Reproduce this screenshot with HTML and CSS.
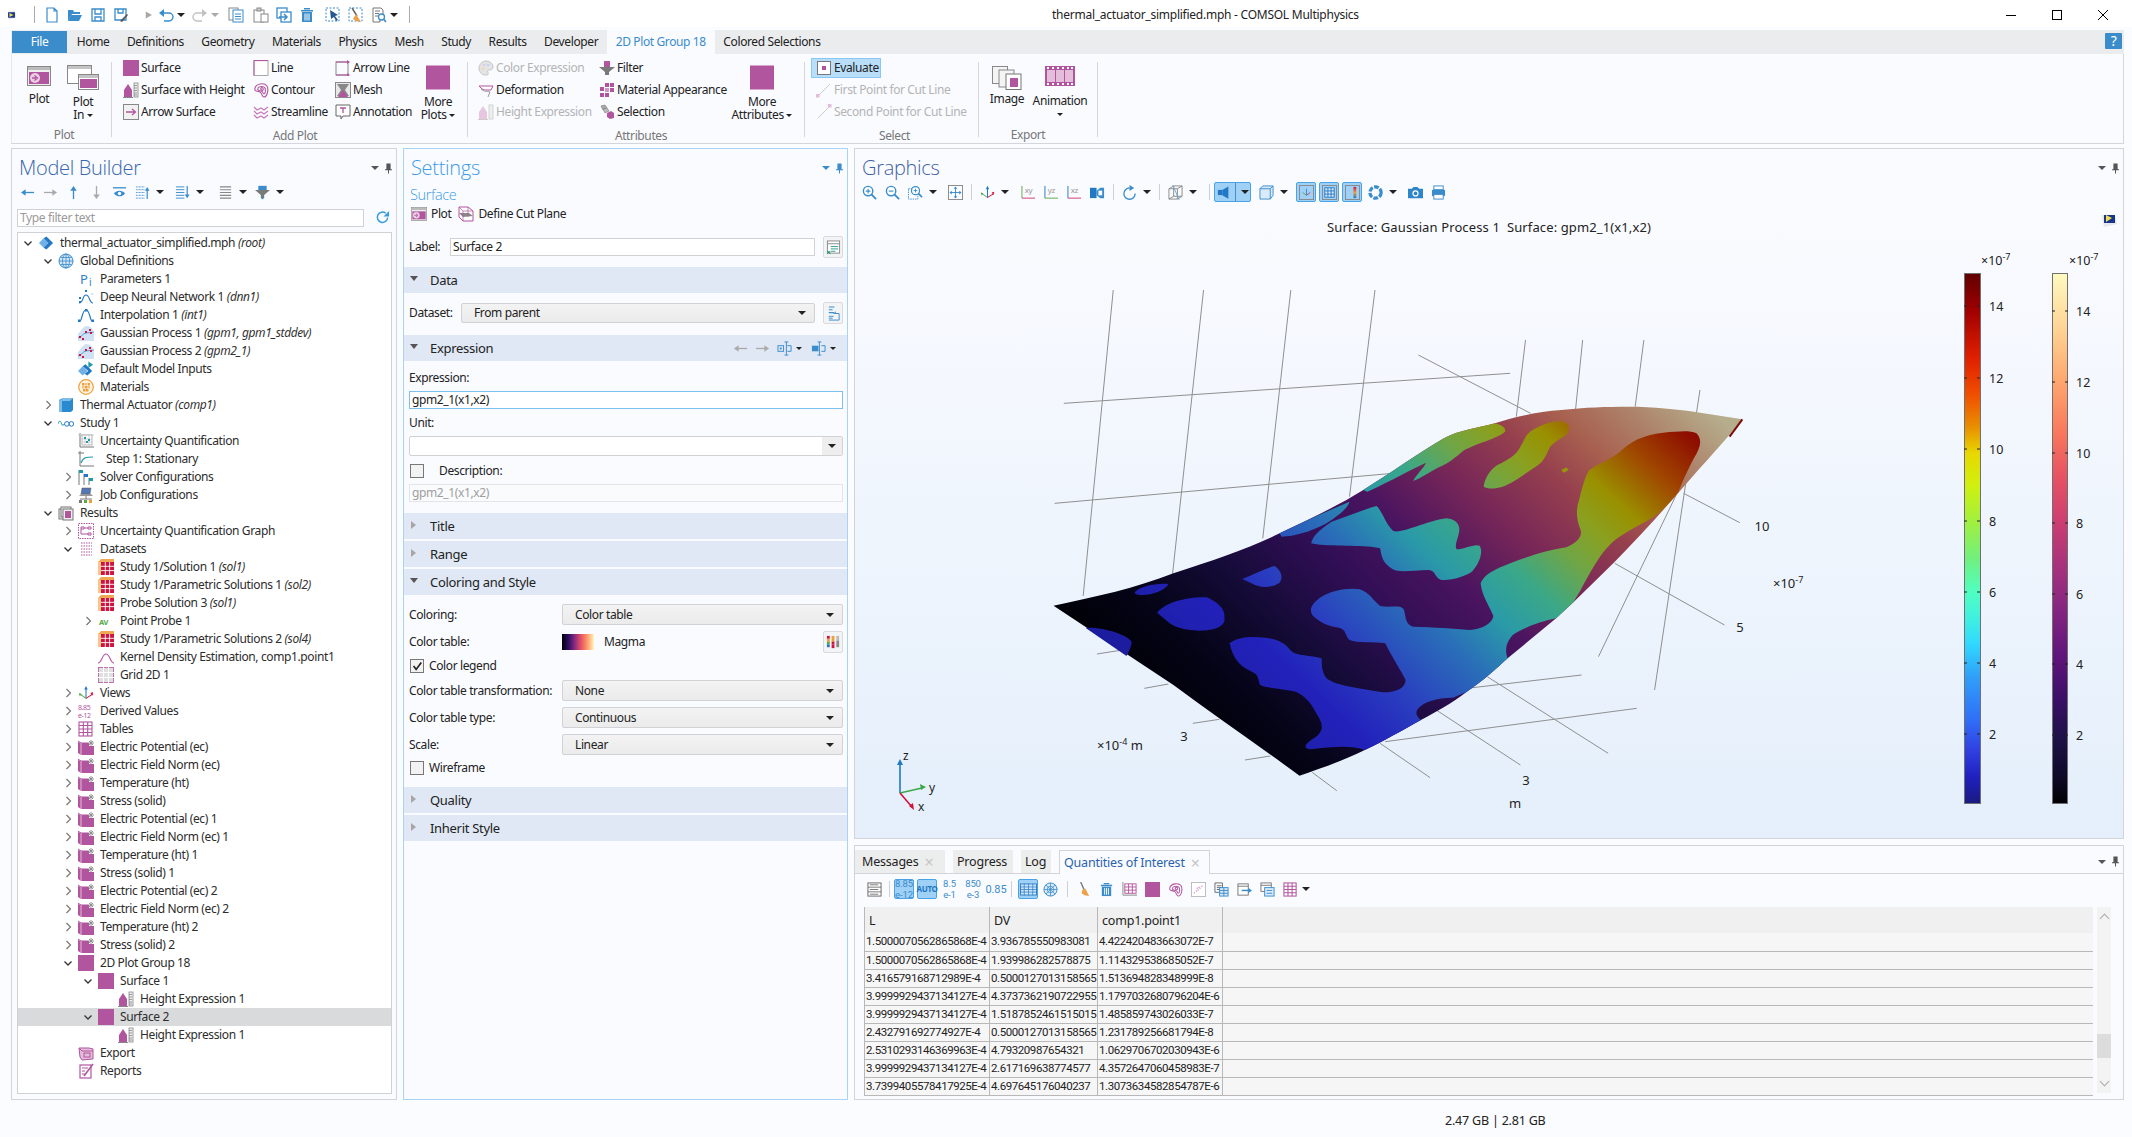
FILE: index.html
```html
<!DOCTYPE html>
<html lang="en">
<head>
<meta charset="utf-8">
<title>thermal_actuator_simplified.mph - COMSOL Multiphysics</title>
<link rel="stylesheet" href="styles.css">
</head>
<body>
<svg class="defs" aria-hidden="true">
<defs>
<symbol id="logo" viewBox="0 0 16 16"><path d="M3 3l10-2 2 11-11 3z" fill="#e8eaee"/><rect x="3" y="4" width="10" height="8" fill="#17358f"/><path d="M5 5l6 3-6 3z" fill="#f2e04a"/></symbol>
<symbol id="new" viewBox="0 0 16 16"><path d="M3 1h7l3 3v11H3z M10 1v3h3" fill="#fff" stroke="#3a8ccb" stroke-width="1.2"/></symbol>
<symbol id="open" viewBox="0 0 16 16"><path d="M1 14V3h5l1 2h6v2H5z" fill="#3a8ccb"/><path d="M1 14l3-6h11l-3 6z" fill="#3a8ccb"/></symbol>
<symbol id="save" viewBox="0 0 16 16"><path d="M2 2h12v12H2z M5 2v5h6V2 M5 14v-4h6v4" fill="none" stroke="#3a8ccb" stroke-width="1.3"/></symbol>
<symbol id="saveas" viewBox="0 0 16 16"><path d="M2 2h11v11H2z M5 2v4h5V2" fill="none" stroke="#3a8ccb" stroke-width="1.3"/><path d="M7 14l7-7 1 1-6 7z" fill="#555"/></symbol>
<symbol id="play" viewBox="0 0 16 16"><path d="M4 3l9 5-9 5z" fill="#a8a8a8"/></symbol>
<symbol id="undo" viewBox="0 0 16 16"><path d="M5 6h6a3.500 3.500 0 010 8H6" fill="none" stroke="#3a8ccb" stroke-width="1.4"/><path d="M1 6l5-4v8z" fill="#3a8ccb"/></symbol>
<symbol id="redo" viewBox="0 0 16 16"><path d="M11 6H5a3.500 3.500 0 000 8h5" fill="none" stroke="#c2c2c2" stroke-width="1.4"/><path d="M15 6l-5-4v8z" fill="#c2c2c2"/></symbol>
<symbol id="copy" viewBox="0 0 16 16"><rect x="1" y="1" width="9" height="12" fill="#fff" stroke="#888"/><rect x="5" y="3" width="10" height="12" fill="#fff" stroke="#3a8ccb"/><path d="M7 7h6M7 9.500h6M7 12h6" stroke="#3a8ccb"/></symbol>
<symbol id="paste" viewBox="0 0 16 16"><rect x="1" y="3" width="10" height="12" fill="#fff" stroke="#888"/><rect x="4" y="1" width="4" height="3" fill="#ccc" stroke="#888"/><rect x="8" y="7" width="7" height="8" fill="#fff" stroke="#888"/></symbol>
<symbol id="dup" viewBox="0 0 16 16"><rect x="1" y="1" width="10" height="10" fill="#fff" stroke="#3a8ccb" stroke-width="1.300"/><rect x="5" y="5" width="10" height="10" fill="#fff" stroke="#3a8ccb" stroke-width="1.300"/><path d="M3 10h8M8 7l3 3-3 3" fill="none" stroke="#3a8ccb" stroke-width="1.500"/></symbol>
<symbol id="trash" viewBox="0 0 16 16"><path d="M5 2.500V1h6v1.500M2 3h12v1.500H2z" fill="#3a8ccb"/><path d="M3 5h10v10H3z" fill="#3a8ccb"/><path d="M6 6.500v7M8 6.500v7M10 6.500v7" stroke="#fff"/></symbol>
<symbol id="selbox" viewBox="0 0 16 16"><rect x="1" y="1" width="13" height="13" fill="#fff" stroke="#3a8ccb" stroke-dasharray="2 1.500"/><path d="M5 3l8 5-3 1 3 4-2 1-2-4-3 2z" fill="#28588f"/></symbol>
<symbol id="broom" viewBox="0 0 16 16"><rect x="1" y="1" width="13" height="13" fill="#fff" stroke="#3a8ccb" stroke-dasharray="2 1.500"/><path d="M4 1l5 8" stroke="#666" stroke-width="1.500"/><path d="M8 7l5 8-5-1-3-2z" fill="#eda24a"/></symbol>
<symbol id="find" viewBox="0 0 16 16"><path d="M2 1h8l2 2v6H9v6H2z M4 4h5M4 6.500h4M4 9h3" fill="#fff" stroke="#777"/><circle cx="10.500" cy="10" r="3" fill="#fff" stroke="#3a8ccb" stroke-width="1.300"/><path d="M12.500 12l2.500 3" stroke="#3a8ccb" stroke-width="1.600"/></symbol>
<symbol id="sq" viewBox="0 0 16 16"><rect width="16" height="16" fill="#b2559f"/></symbol>
<symbol id="plotbtn" viewBox="0 0 24 20"><rect x=".5" y=".5" width="23" height="19" fill="#eee" stroke="#888"/><rect x="1" y="1" width="22" height="3" fill="#bbb"/><rect x="2" y="6" width="20" height="12" fill="#b2559f"/><circle cx="8" cy="12" r="5" fill="#e9cfe3"/><path d="M5 12h4M7.500 9.500l3 2.500-3 2.500" fill="none" stroke="#b2559f" stroke-width="1.300"/></symbol>
<symbol id="plotin" viewBox="0 0 32 25"><rect x=".5" y=".5" width="24" height="18" fill="#fff" stroke="#888"/><rect x="1" y="1" width="23" height="3" fill="#c4c4c4"/><rect x="11.500" y="9.500" width="20" height="15" fill="#fff" stroke="#888"/><rect x="12" y="10" width="19" height="3" fill="#c4c4c4"/><rect x="13" y="14" width="17" height="9" fill="#b2559f"/></symbol>
<symbol id="height" viewBox="0 0 16 16"><path d="M1 15V8l4-6 4 6v7z" fill="#b2559f"/><rect x="11" y="1" width="4" height="14" fill="#eee" stroke="#888" stroke-width=".8"/><path d="M11 3.500h3M11 6h3M11 8.500h3M11 11h3M11 13h3" stroke="#777" stroke-width=".7"/><path d="M0 15.500h10" stroke="#888"/></symbol>
<symbol id="heightoff" viewBox="0 0 16 16"><path d="M1 15V8l4-6 4 6v7z" fill="#e6c7df"/><rect x="11" y="1" width="4" height="14" fill="#eee" stroke="#ccc" stroke-width=".8"/><path d="M0 15.500h10" stroke="#ccc"/></symbol>
<symbol id="arrowsurf" viewBox="0 0 16 16"><rect x=".5" y=".5" width="15" height="15" fill="#f1f1f1" stroke="#888"/><path d="M3 8h9M9 5l3.500 3L9 11" fill="none" stroke="#b2559f" stroke-width="1.300"/></symbol>
<symbol id="line" viewBox="0 0 16 16"><rect x="1" y=".5" width="14" height="15" fill="#fff" stroke="#a9a9a9"/><path d="M1 .5h14" stroke="#b2559f" stroke-width="1.200"/><path d="M1 .5v15" stroke="#b2559f"/></symbol>
<symbol id="contour" viewBox="0 0 16 16"><g fill="none" stroke="#b2559f" stroke-width="1.100"><path d="M2 6c1-4 9-6 12-2 2 4 0 11-3 11-2 0-2-4-4-5S1 10 2 6z"/><path d="M5 6c1-2 6-2 7 0 1 3 0 6-1 6s-1-3-3-3-4-1-3-3z"/><path d="M8 6c1-1 3 0 2 2-1 1-3-1-2-2z"/></g></symbol>
<symbol id="stream" viewBox="0 0 16 16"><g fill="none" stroke="#c779b9" stroke-width="1.200"><path d="M1 3l3 3 4-2 3 2 4-3"/><path d="M1 7l3 3 4-2 3 2 4-3"/><path d="M1 11l3 3 4-2 3 2 4-3"/></g></symbol>
<symbol id="arrowline" viewBox="0 0 16 16"><rect x="1" y="2" width="12" height="13" fill="none" stroke="#888"/><path d="M1 2h13M1 15h13" stroke="#b2559f"/><path d="M12 0l3 2-3 2zM12 13l3 2-3 2z" fill="#b2559f"/></symbol>
<symbol id="mesh" viewBox="0 0 16 16"><rect x=".5" y=".5" width="15" height="15" fill="#e8e8e8" stroke="#888"/><path d="M2 2h12l-4 6 4 6H2l4-6z" fill="#888"/><path d="M3 15l5-7 5 7z" fill="#b2559f"/></symbol>
<symbol id="annot" viewBox="0 0 16 16"><path d="M1 1h14v11H8l-2 3v-3H1z" fill="#fff" stroke="#666"/><path d="M5 4h6M8 4v5" stroke="#b2559f" stroke-width="1.300"/></symbol>
<symbol id="colorexpr" viewBox="0 0 16 16"><path d="M8 1c4 0 7 3 7 6s-3 3-4 3-2 1-1 3-1 2-3 2C3 15 1 11 1 8s3-7 7-7z" fill="#e4e4e4" stroke="#c4c4c4"/><circle cx="6" cy="5" r="1.300" fill="#e6c7df"/><circle cx="10" cy="5" r="1.300" fill="#bcd7ee"/><circle cx="5" cy="9" r="1.300" fill="#f1d5b0"/></symbol>
<symbol id="deform" viewBox="0 0 16 16"><path d="M1 4h14l-2 4H8C6 8 4 7 3 6z" fill="#fff" stroke="#b2559f"/><path d="M3 7c3 3 6 2 9 3l-2 5" fill="none" stroke="#999"/></symbol>
<symbol id="filter" viewBox="0 0 16 16"><path d="M0 7h16l-6 5v3H6v-3z" fill="#7a7a7a"/><rect x="5" y="1" width="6" height="6" fill="#b2559f"/></symbol>
<symbol id="matapp" viewBox="0 0 16 16"><g fill="#b2559f"><rect x="1" y="5" width="4" height="4"/><rect x="6" y="1" width="4" height="4"/><rect x="11" y="1" width="4" height="4"/><rect x="11" y="6" width="4" height="4"/><rect x="6" y="6" width="4" height="4" opacity=".6"/><rect x="1" y="11" width="4" height="4"/><rect x="6" y="11" width="4" height="4"/></g></symbol>
<symbol id="selection" viewBox="0 0 16 16"><path d="M2 2l4-1 2 3-4 2z" fill="#aaa" stroke="#777" stroke-width=".6"/><path d="M4 5l4-1 2 3-4 2z" fill="#bbb" stroke="#777" stroke-width=".6"/><path d="M8 9l4-2 3 2v5l-4 1-3-2z" fill="#b2559f"/></symbol>
<symbol id="evalpt" viewBox="0 0 16 16"><rect x="1.500" y="1.500" width="13" height="13" fill="#fff" stroke="#777"/><rect x="6" y="6" width="4" height="4" fill="#b2559f"/></symbol>
<symbol id="cut1" viewBox="0 0 16 16"><path d="M2 14L14 2" stroke="#ccc"/><rect x="0" y="12" width="3.500" height="3.500" fill="#e3bdda"/></symbol>
<symbol id="cut2" viewBox="0 0 16 16"><path d="M2 14L14 2" stroke="#ccc"/><rect x="12" y="0" width="3.500" height="3.500" fill="#e3bdda"/></symbol>
<symbol id="image" viewBox="0 0 30 24"><rect x=".5" y=".5" width="15" height="17" fill="#f4f4f4" stroke="#888"/><rect x="7" y="4" width="15" height="17" fill="#f4f4f4" stroke="#888"/><rect x="14" y="8" width="15" height="15.500" fill="#fff" stroke="#777"/><rect x="18" y="12" width="8" height="9" fill="#b2559f"/></symbol>
<symbol id="anim" viewBox="0 0 30 20"><rect width="30" height="20" fill="#b2559f"/><g fill="#e3bdda"><rect x="2" y="4" width="8" height="12"/><rect x="11" y="4" width="8" height="12"/><rect x="20" y="4" width="8" height="12"/></g><g fill="#fff"><rect x="2" y="1" width="2" height="2"/><rect x="7" y="1" width="2" height="2"/><rect x="12" y="1" width="2" height="2"/><rect x="17" y="1" width="2" height="2"/><rect x="22" y="1" width="2" height="2"/><rect x="26" y="1" width="2" height="2"/><rect x="2" y="17" width="2" height="2"/><rect x="7" y="17" width="2" height="2"/><rect x="12" y="17" width="2" height="2"/><rect x="17" y="17" width="2" height="2"/><rect x="22" y="17" width="2" height="2"/><rect x="26" y="17" width="2" height="2"/></g></symbol>
<symbol id="chevd" viewBox="0 0 12 12"><path d="M2.500 4.500L6 8l3.500-3.500" fill="none" stroke="#333" stroke-width="1.300"/></symbol>
<symbol id="chevr" viewBox="0 0 12 12"><path d="M4.500 2L8.500 6l-4 4" fill="none" stroke="#777" stroke-width="1.200"/></symbol>
<symbol id="left" viewBox="0 0 16 16"><path d="M15 8H4" stroke="#3a8ccb" stroke-width="1.400"/><path d="M1 8l5-3.500v7z" fill="#3a8ccb"/></symbol>
<symbol id="right" viewBox="0 0 16 16"><path d="M1 8h11" stroke="#aaa" stroke-width="1.400"/><path d="M15 8l-5-3.500v7z" fill="#aaa"/></symbol>
<symbol id="leftg" viewBox="0 0 16 16"><path d="M15 8H4" stroke="#aaa" stroke-width="1.400"/><path d="M1 8l5-3.500v7z" fill="#aaa"/></symbol>
<symbol id="up" viewBox="0 0 16 16"><path d="M8 15V4" stroke="#3a8ccb" stroke-width="1.400"/><path d="M8 1L4.500 6h7z" fill="#3a8ccb"/></symbol>
<symbol id="down" viewBox="0 0 16 16"><path d="M8 1v11" stroke="#aaa" stroke-width="1.400"/><path d="M8 15l-3.500-5h7z" fill="#aaa"/></symbol>
<symbol id="eye" viewBox="0 0 16 16"><path d="M1 3h14" stroke="#3a8ccb" stroke-width="1.400"/><path d="M2 9c3-4 9-4 12 0-3 4-9 4-12 0z" fill="#3a8ccb"/><circle cx="8" cy="9" r="1.800" fill="#fff"/></symbol>
<symbol id="listup" viewBox="0 0 16 16"><path d="M1 2h9M1 5h9M1 8h9M1 11h9M1 14h9" stroke="#3a8ccb" stroke-dasharray="1 .6"/><path d="M13 15V5" stroke="#3a8ccb" stroke-width="1.300"/><path d="M13 2l-2.500 4h5z" fill="#3a8ccb"/></symbol>
<symbol id="listdn" viewBox="0 0 16 16"><path d="M1 2h9M1 5h9M1 8h9M1 11h9M1 14h9" stroke="#3a8ccb"/><path d="M13 1v10" stroke="#3a8ccb" stroke-width="1.300"/><path d="M13 14l-2.500-4h5z" fill="#3a8ccb"/></symbol>
<symbol id="list" viewBox="0 0 16 16"><path d="M2 2h12M2 5h12M2 8h12M2 11h12M2 14h12" stroke="#888" stroke-width="1.200"/></symbol>
<symbol id="mfilter" viewBox="0 0 18 16"><path d="M0 5h18l-7 6v4H7v-4z" fill="#7a7a7a"/><rect x="4" y="0" width="10" height="5" fill="#3a8ccb"/><rect x="8" y="13" width="2" height="3" fill="#3a8ccb"/></symbol>
<symbol id="refresh" viewBox="0 0 16 16"><path d="M13.500 8a5.500 5.500 0 11-2-4.500" fill="none" stroke="#3a9ae0" stroke-width="1.600"/><path d="M15 1v6H9z" fill="#3a9ae0"/></symbol>
<symbol id="pin" viewBox="0 0 10 14"><path d="M2 0h6v8H2zM0 8h10v1.500H0zM4.300 9h1.400v5H4.300z" fill="currentColor"/></symbol>
<symbol id="root" viewBox="0 0 17 16"><path d="M1 8l5-5 5 5-5 5z" fill="#6fb1e6"/><path d="M6 3l3-2 7 7-7 7-3-2 5-5z" fill="#2278c4"/></symbol>
<symbol id="globe" viewBox="0 0 16 16"><circle cx="8" cy="8" r="7" fill="#d5e6f6" stroke="#3a8ccb"/><path d="M1 8h14M8 1v14M2.500 4.500h11M2.500 11.500h11" stroke="#3a8ccb" stroke-width=".8"/><ellipse cx="8" cy="8" rx="3.500" ry="7" fill="none" stroke="#3a8ccb" stroke-width=".8"/></symbol>
<symbol id="pi" viewBox="0 0 16 16"><text x="2" y="13" font-family="Noto Sans" font-size="13" fill="#2c80c8">P</text><text x="11" y="15" font-family="Noto Sans" font-size="10" fill="#2c80c8">i</text></symbol>
<symbol id="dnn" viewBox="0 0 16 16"><path d="M1 14c5 0 3-8 7-8s3 8 7 8" fill="none" stroke="#2278c4" stroke-width="1.100"/><g fill="#2278c4"><rect x="1" y="8" width="2" height="2"/><rect x="7" y="1" width="2" height="2"/><rect x="1" y="12" width="2" height="2"/><rect x="13" y="4" width="2" height="2" opacity=".2"/></g></symbol>
<symbol id="interp" viewBox="0 0 16 16"><path d="M1 14h1c2 0 2-11 6-11s4 11 6 11h1" fill="none" stroke="#2278c4" stroke-width="1.200"/><rect x="0" y="12.500" width="2.500" height="2.500" fill="#2278c4"/><rect x="13.500" y="12.500" width="2.500" height="2.500" fill="#2278c4"/><rect x="7" y="2" width="2.500" height="2.500" fill="#2278c4"/></symbol>
<symbol id="gp" viewBox="0 0 16 16"><path d="M0 16V9C3 6 5 1 9 1s7 4 7 9v6z" fill="#cfe1f2"/><path d="M0 13c3 0 5-5 8-5s5-1 8-1" fill="none" stroke="#3a8ccb" stroke-width=".8"/><g stroke="#d1123f" stroke-width="1"><path d="M1 11l2 2M3 11l-2 2M7 6l2 2M9 6l-2 2M11 4l2 2M13 4l-2 2M4 13l2 2M6 13l-2 2M12 7l2 2M14 7l-2 2"/></g></symbol>
<symbol id="inputs" viewBox="0 0 17 16"><path d="M0 10l5-5 5 5-5 5z" fill="#6fb1e6"/><path d="M5 5l3-2 7 7-5 5-3-2 4-3z" fill="#2278c4"/><path d="M11 0v7l5-3.500z" fill="#1c9aa8"/></symbol>
<symbol id="mat" viewBox="0 0 16 16"><circle cx="8" cy="8" r="7.300" fill="#fff4e4" stroke="#ee9f3a" stroke-width="1.200"/><g fill="#ee9f3a"><rect x="4" y="4" width="2.500" height="2.500"/><rect x="7" y="4" width="2.500" height="2.500" opacity=".6"/><rect x="10" y="4" width="2" height="2.500"/><rect x="4" y="7" width="2.500" height="2.500" opacity=".6"/><rect x="7" y="7" width="2.500" height="2.500"/><rect x="10" y="7" width="2" height="2.500" opacity=".6"/><rect x="5" y="10" width="2.500" height="2.500"/><rect x="8" y="10" width="2.500" height="2.500"/></g></symbol>
<symbol id="comp" viewBox="0 0 16 16"><path d="M1 3l4-2h10v12l-2 2H1z" fill="#2a8ad0"/><path d="M1 3h12v12" fill="none"/><path d="M5 1h10l-3 3H2z" fill="#7fbde8"/><path d="M1 3l3 1v11H1z" fill="#7fbde8"/></symbol>
<symbol id="study" viewBox="0 0 18 16"><path d="M0 9c1-4 3-4 4 0 0 2 3 2 3 0" fill="none" stroke="#1c9aa8" stroke-width="1.100"/><circle cx="10" cy="9" r="2.600" fill="none" stroke="#2278c4" stroke-width="1.100"/><circle cx="15" cy="9" r="2.600" fill="none" stroke="#2278c4" stroke-width="1.100"/></symbol>
<symbol id="uq" viewBox="0 0 16 16"><path d="M2 0v14h14" fill="none" stroke="#777"/><path d="M0 2h16" stroke="#ccc"/><rect x="4" y="2" width="10" height="10" fill="#fff" stroke="#999" stroke-width=".7"/><path d="M7 2v10M11 2v10M4 6h10M4 9h10" stroke="#bbb" stroke-width=".6"/><g fill="#1c9aa8"><rect x="6" y="4" width="2" height="2"/><rect x="10" y="6" width="2" height="2"/><rect x="8" y="8" width="2" height="2"/></g></symbol>
<symbol id="step" viewBox="0 0 16 16"><path d="M2 0v15h14M0 2h6" fill="none" stroke="#777"/><path d="M3 12c2-6 6-6 12-6" fill="none" stroke="#1c9aa8" stroke-width="1.100"/></symbol>
<symbol id="solver" viewBox="0 0 16 16"><path d="M1 1v15M6 5v11M11 9v7" stroke="#777"/><path d="M1 1h4v3H1z" fill="#1c9aa8"/><path d="M6 5h4v3H6z" fill="#2278c4"/><path d="M11 9h4v3h-4z" fill="#1c9aa8"/></symbol>
<symbol id="job" viewBox="0 0 16 16"><path d="M4 1h9l-1 6H3z" fill="#5378b4" stroke="#555" stroke-width=".5"/><path d="M1 9l2-2h10l2 2z" fill="#999"/><path d="M8 9v3M2 12h12" stroke="#777"/><rect x="1" y="13" width="3" height="3" fill="#777"/><rect x="6" y="13" width="3" height="3" fill="#5aa84a"/><rect x="11" y="13" width="3" height="3" fill="#ee9f3a"/></symbol>
<symbol id="results" viewBox="0 0 16 16"><rect x="1" y="4" width="10" height="10" fill="#eee" stroke="#777"/><rect x="3" y="2" width="10" height="10" fill="#eee" stroke="#777"/><rect x="5" y="4" width="10" height="11" fill="#eee" stroke="#777"/><rect x="7" y="6" width="6" height="7" fill="#b2559f"/></symbol>
<symbol id="uqg" viewBox="0 0 16 16"><rect x=".5" y=".5" width="15" height="15" fill="none" stroke="#b2559f" stroke-dasharray="1.500 1"/><path d="M3 4h3v2H3zM10 4h3v2h-3zM10 10h3v2h-3zM3 6v5h7M6 5h4" fill="none" stroke="#b2559f"/></symbol>
<symbol id="data" viewBox="0 0 16 16"><g stroke="#b2559f" stroke-dasharray="1.500 1" stroke-width="1.100"><path d="M3 2h11M3 5h11M3 8h11M3 11h11M3 14h11"/></g></symbol>
<symbol id="sol" viewBox="0 0 16 16"><path d="M0 3l3-3h13v3H3v13l-3-2z" fill="#f2a852"/><path d="M0 3l3 0v13H0z" fill="#f7c68a"/><rect x="3" y="3" width="13" height="13" fill="#d1123f"/><path d="M7.300 3v13M11.600 3v13M3 7.300h13M3 11.600h13" stroke="#fff" stroke-width=".9"/></symbol>
<symbol id="av" viewBox="0 0 16 16"><text x="1" y="11.500" font-family="Noto Sans" font-weight="700" font-size="7.500" fill="#5aa84a">AV</text></symbol>
<symbol id="kde" viewBox="0 0 16 16"><path d="M0 14c4 0 4-9 8-9s4 9 8 9" fill="none" stroke="#b2559f" stroke-width="1.100"/></symbol>
<symbol id="grid" viewBox="0 0 16 16"><rect x=".5" y=".5" width="15" height="15" fill="#e0e0e0" stroke="#b2559f" stroke-width=".8"/><path d="M5.500 0v16M10.500 0v16M0 5.500h16M0 10.500h16" stroke="#fff"/></symbol>
<symbol id="views" viewBox="0 0 18 16"><path d="M9 14V2" stroke="#2278c4" stroke-width="1.200"/><path d="M9 0L7 4h4z" fill="#2278c4"/><path d="M9 14L2 9" stroke="#5aa84a" stroke-width="1.200"/><path d="M9 14l8-5" stroke="#d1123f" stroke-width="1.200"/><path d="M1 8l1 4 2-3z" fill="#5aa84a"/><path d="M17 7l-1 4-2-3z" fill="#d1123f"/></symbol>
<symbol id="derived" viewBox="0 0 16 16"><text x="0" y="7" font-family="Noto Sans" font-size="7" fill="#b2559f">8.85</text><text x="0" y="14.500" font-family="Noto Sans" font-size="7" fill="#b2559f">e-12</text></symbol>
<symbol id="tables" viewBox="0 0 16 16"><rect x="1" y="1" width="13" height="14" fill="#fff" stroke="#b2559f" stroke-width="1.100"/><path d="M5.300 1v14M9.700 1v14M1 4.500h13M1 8h13M1 11.500h13" stroke="#b2559f" stroke-width="1.100"/></symbol>
<symbol id="plot3d" viewBox="0 0 16 16"><path d="M0 3l3 1h8v12H3l-3-2z" fill="#b2559f"/><path d="M11 7h5v9h-5z" fill="#b2559f"/><path d="M0 2l3 2h7" fill="none" stroke="#b2559f"/><path d="M3 4v12" stroke="#fff" stroke-width=".6"/><path d="M13 1v6M10 4h6M11 2l4 4M15 2l-4 4" stroke="#888" stroke-width=".9"/></symbol>
<symbol id="export" viewBox="0 0 16 16"><path d="M1 3h10l4 1v10l-11 1-2-3z" fill="#e3bdda" stroke="#b2559f"/><path d="M1 3l3 3h11" fill="none" stroke="#b2559f"/><rect x="6" y="8" width="6" height="4" fill="none" stroke="#b2559f"/></symbol>
<symbol id="reports" viewBox="0 0 16 16"><rect x="2" y="2" width="11" height="13" fill="#fff" stroke="#b2559f" stroke-width="1.200"/><path d="M4 5h6M4 8h3M4 11h3" stroke="#b2559f"/><path d="M6 13l9-12" stroke="#b2559f" stroke-width="1.600"/></symbol>
<symbol id="cutplane" viewBox="0 0 16 16"><path d="M1 1l9 0 5 4v10H5L1 11z" fill="#fff" stroke="#b2559f"/><path d="M1 7h10l4 3-10 1z" fill="#888"/><path d="M10 1v10M1 1l4 4h10M5 5v10" fill="none" stroke="#b2559f" stroke-width=".7"/></symbol>
<symbol id="notes" viewBox="0 0 16 16"><rect x="1.500" y="1" width="13" height="13" fill="#fff" stroke="#888"/><path d="M1.500 4h13" stroke="#888"/><path d="M5 7h8M5 9.500h8M5 12h5" stroke="#2c9c8a"/><path d="M1 15l3-3M1 12.500h3V15" fill="none" stroke="#1c9a6a"/></symbol>
<symbol id="dset" viewBox="0 0 16 16"><path d="M3 1h6M3 4h4M3 7h6" stroke="#3a8ccb" stroke-width="1.200"/><path d="M10 6v2M8 8h6v7H3M3 11h5M3 13h4" fill="none" stroke="#3a8ccb"/></symbol>
<symbol id="insert1" viewBox="0 0 16 16"><rect x="1" y="5" width="6" height="6" fill="none" stroke="#3a8ccb"/><rect x="3" y="7" width="2" height="2" fill="#3a8ccb"/><path d="M8 1h4M10 1v14M8 15h4M11 5h4v6h-4" fill="none" stroke="#3a8ccb"/></symbol>
<symbol id="insert2" viewBox="0 0 16 16"><rect x="1" y="5" width="7" height="6" fill="#3a8ccb"/><path d="M7 1h4M9 1v14M7 15h4M11 5h4v6h-4" fill="none" stroke="#3a8ccb"/></symbol>
<symbol id="palette" viewBox="0 0 16 16"><g><rect x="1" y="1" width="3" height="3" fill="#d1123f"/><rect x="1" y="4" width="3" height="3" fill="#ee9f3a"/><rect x="1" y="7" width="3" height="3" fill="#5aa84a"/><rect x="1" y="10" width="3" height="3" fill="#2278c4"/><rect x="6" y="1" width="3" height="6" fill="#ee9f3a"/><rect x="6" y="7" width="3" height="3" fill="#d1123f"/><rect x="6" y="10" width="3" height="4" fill="#d1123f"/><rect x="11" y="1" width="3" height="5" fill="#bbb"/><rect x="11" y="6" width="3" height="7" fill="#888"/></g></symbol>
<symbol id="zoomin" viewBox="0 0 16 16"><circle cx="6.500" cy="6.500" r="5" fill="#fff" stroke="#3a8ccb" stroke-width="1.500"/><path d="M10 10l5 5" stroke="#3a8ccb" stroke-width="2"/><path d="M4 6.500h5M6.500 4v5" stroke="#3a8ccb" stroke-width="1.200"/></symbol>
<symbol id="zoomout" viewBox="0 0 16 16"><circle cx="6.500" cy="6.500" r="5" fill="#fff" stroke="#3a8ccb" stroke-width="1.500"/><path d="M10 10l5 5" stroke="#3a8ccb" stroke-width="2"/><path d="M4 6.500h5" stroke="#3a8ccb" stroke-width="1.200"/></symbol>
<symbol id="zoombox" viewBox="0 0 16 16"><rect x=".5" y="4" width="10" height="11" fill="none" stroke="#3a8ccb" stroke-dasharray="1.500 1"/><circle cx="8" cy="6" r="4.300" fill="#fff" stroke="#3a8ccb" stroke-width="1.300"/><path d="M11 9l4 4" stroke="#3a8ccb" stroke-width="1.800"/><path d="M6 6h4M8 4v4" stroke="#3a8ccb"/></symbol>
<symbol id="fit" viewBox="0 0 16 16"><rect x=".5" y=".5" width="15" height="15" fill="none" stroke="#888"/><path d="M8 3v10M3 8h10" stroke="#3a8ccb"/><path d="M8 1.500l-2 2.500h4zM8 14.500l-2-2.500h4zM1.500 8L4 6v4zM14.500 8L12 6v4z" fill="#3a8ccb"/></symbol>
<symbol id="xy" viewBox="0 0 16 16"><path d="M1 1v13" stroke="#5aa84a"/><path d="M1 14h14" stroke="#d1366f"/><text x="4" y="9" font-family="Noto Sans" font-size="8.500" fill="#999">xy</text></symbol>
<symbol id="yz" viewBox="0 0 16 16"><path d="M1 1v13" stroke="#2278c4"/><path d="M1 14h14" stroke="#5aa84a"/><text x="4" y="9" font-family="Noto Sans" font-size="8.500" fill="#999">yz</text></symbol>
<symbol id="xz" viewBox="0 0 16 16"><path d="M1 1v13" stroke="#2278c4"/><path d="M1 14h14" stroke="#d1366f"/><text x="4" y="9" font-family="Noto Sans" font-size="8.500" fill="#999">xz</text></symbol>
<symbol id="campers" viewBox="0 0 16 16"><rect x="0" y="3" width="7" height="11" fill="#2278c4"/><path d="M7 6l4-3h4v11h-4l-4-3z" fill="#3a8ccb"/><rect x="9" y="6" width="4" height="5" fill="#fff"/></symbol>
<symbol id="rotate" viewBox="0 0 16 16"><path d="M8 3.200A6 6 0 1 0 14 9" fill="none" stroke="#3a8ccb" stroke-width="1.400"/><path d="M8 0l5 3.200-5 3.200z" fill="#3a8ccb"/></symbol>
<symbol id="wire" viewBox="0 0 16 16"><path d="M1 4l5-3h9v11l-5 3H1z M1 4h9v11M10 4l5-3M1 15l5-3h9M6 1v11" fill="none" stroke="#888"/><path d="M5 0l7 16" stroke="#6ba7d8"/></symbol>
<symbol id="light" viewBox="0 0 16 16"><rect x="1" y="5" width="5" height="6" fill="#2278c4"/><path d="M6 5l7-4v14l-7-4z" fill="#2278c4"/></symbol>
<symbol id="box3" viewBox="0 0 16 16"><path d="M1 4l3-3h11v10l-3 4H1z" fill="#dbeafa" stroke="#3a8ccb"/><path d="M1 4h11v11M12 4l3-3" fill="none" stroke="#3a8ccb"/></symbol>
<symbol id="tgaxes" viewBox="0 0 16 16"><rect x=".5" y=".5" width="15" height="15" fill="none" stroke="#888"/><path d="M8 11V4" stroke="#3a8ccb"/><path d="M8 11L4 8" stroke="#5aa84a"/><path d="M8 11l4-3" stroke="#d1366f"/></symbol>
<symbol id="tggrid" viewBox="0 0 16 16"><rect x=".5" y=".5" width="15" height="15" fill="none" stroke="#888"/><rect x="3" y="3" width="10" height="10" fill="#dbeafa" stroke="#2278c4"/><path d="M6.300 3v10M9.700 3v10M3 6.300h10M3 9.700h10" stroke="#2278c4"/></symbol>
<symbol id="tgleg" viewBox="0 0 16 16"><rect x=".5" y=".5" width="15" height="15" fill="none" stroke="#888"/><defs><linearGradient id="lgb" x1="0" y1="0" x2="0" y2="1"><stop offset="0" stop-color="#d1123f"/><stop offset=".5" stop-color="#ee9f3a"/><stop offset="1" stop-color="#2278c4"/></linearGradient></defs><rect x="9" y="2" width="3" height="12" fill="url(#lgb)"/></symbol>
<symbol id="aperture" viewBox="0 0 16 16"><circle cx="8" cy="8" r="6" fill="none" stroke="#3a8ccb" stroke-width="3.500" stroke-dasharray="5 1.500"/></symbol>
<symbol id="camera" viewBox="0 0 16 16"><path d="M0 4h4l2-2h4l2 2h4v10H0z" fill="#2e86c8"/><circle cx="8" cy="9" r="3.300" fill="#fff"/><circle cx="8" cy="9" r="2" fill="#2e86c8"/></symbol>
<symbol id="print" viewBox="0 0 16 16"><rect x="3" y="1" width="10" height="4" fill="#fff" stroke="#3a8ccb"/><rect x="1" y="5" width="14" height="7" rx="1" fill="#3a8ccb"/><rect x="3" y="10" width="10" height="5" fill="#fff" stroke="#3a8ccb"/></symbol>
<symbol id="msglist" viewBox="0 0 16 16"><rect x="1" y="1" width="14" height="14" fill="#fff" stroke="#666"/><path d="M1 5.500h14M1 10.500h14M3 3h9M3 8h9M3 13h9" stroke="#666" stroke-width=".9"/></symbol>
<symbol id="tbl" viewBox="0 0 20 14"><rect x=".5" y=".5" width="19" height="13" fill="#cfe4f7" stroke="#2278c4"/><path d="M0 4h20M0 7h20M0 10h20M5 0v14M10 0v14M15 0v14" stroke="#2278c4" stroke-width=".8"/></symbol>
<symbol id="sphere" viewBox="0 0 16 16"><circle cx="8" cy="8" r="7" fill="#dbeafa" stroke="#3a8ccb"/><path d="M1 8h14M8 1v14M3 3l10 10M13 3L3 13" stroke="#3a8ccb" stroke-width=".8"/><circle cx="8" cy="8" r="3.500" fill="none" stroke="#3a8ccb" stroke-width=".8"/></symbol>
<symbol id="mbroom" viewBox="0 0 16 16"><path d="M5 0l4 9" stroke="#777" stroke-width="1.500"/><path d="M7 8l3-1 4 8-5-1-3-2z" fill="#eda24a"/></symbol>
<symbol id="tblp" viewBox="0 0 16 16"><path d="M1 0v14h15" fill="none" stroke="#888"/><rect x="3" y="2" width="12" height="10" fill="#fff" stroke="#b2559f"/><path d="M7 2v10M11 2v10M3 5.300h12M3 8.700h12" stroke="#b2559f"/></symbol>
<symbol id="scatter" viewBox="0 0 16 16"><rect x=".5" y=".5" width="15" height="15" fill="#fff" stroke="#bbb"/><g fill="#c779b9"><rect x="3" y="11" width="1.200" height="1.200"/><rect x="5" y="9" width="1.200" height="1.200"/><rect x="7" y="8" width="1.200" height="1.200"/><rect x="9" y="6" width="1.200" height="1.200"/><rect x="11" y="4" width="1.200" height="1.200"/><rect x="8" y="5" width="1.200" height="1.200"/><rect x="6" y="6" width="1.200" height="1.200"/></g></symbol>
<symbol id="tocopy" viewBox="0 0 16 16"><path d="M1 1h8v10H1z M3 4h5M3 6h5M3 8h4" fill="#fff" stroke="#666"/><rect x="6" y="6" width="9" height="9" fill="#dbeafa" stroke="#3a8ccb"/><path d="M6 9h9M6 12h9M10.500 6v9" stroke="#3a8ccb"/></symbol>
<symbol id="toexp" viewBox="0 0 16 16"><rect x="1" y="2" width="11" height="12" fill="#fff" stroke="#777"/><path d="M1 4.500h11" stroke="#777"/><path d="M5 9h7" stroke="#3a8ccb" stroke-width="1.600"/><path d="M16 9l-4-3v6z" fill="#3a8ccb"/></symbol>
<symbol id="tomod" viewBox="0 0 16 16"><rect x="1" y="1" width="11" height="9" fill="#fff" stroke="#777"/><path d="M1 3.500h11" stroke="#777"/><rect x="5" y="6" width="10" height="9" fill="#dbeafa" stroke="#3a8ccb"/><path d="M7 9h6M7 12h6" stroke="#3a8ccb"/></symbol>
</defs>
</svg>

<div class="titlebar">
  <div class="qat">
    <svg class="qi logo"><use href="#logo"/></svg>
    <span class="vsep ml10"></span>
    <svg class="qi ml2"><use href="#new"/></svg>
    <svg class="qi"><use href="#open"/></svg>
    <svg class="qi"><use href="#save"/></svg>
    <svg class="qi"><use href="#saveas"/></svg>
    <svg class="qi sm ml7"><use href="#play"/></svg>
    <svg class="qi undoq"><use href="#undo"/></svg><span class="caret tight"></span>
    <svg class="qi"><use href="#redo"/></svg><span class="caret tight pale"></span>
    <svg class="qi ml2"><use href="#copy"/></svg>
    <svg class="qi ml2"><use href="#paste"/></svg>
    <svg class="qi"><use href="#dup"/></svg>
    <svg class="qi"><use href="#trash"/></svg>
    <svg class="qi ml3"><use href="#selbox"/></svg>
    <svg class="qi"><use href="#broom"/></svg>
    <svg class="qi"><use href="#find"/></svg><span class="caret tight"></span>
    <span class="vsep ml4"></span>
  </div>
  <div class="apptitle">thermal_actuator_simplified.mph - COMSOL Multiphysics</div>
  <div class="winbtns">
    <svg class="wb" viewBox="0 0 12 12"><path d="M1 6.500h10" stroke="#000" stroke-width="1"/></svg>
    <svg class="wb" viewBox="0 0 12 12"><rect x="1.500" y="1.500" width="9" height="9" fill="none" stroke="#000"/></svg>
    <svg class="wb" viewBox="0 0 12 12"><path d="M1 1l10 10M11 1L1 11" stroke="#000"/></svg>
  </div>
</div>

<div class="ribbon">
  <div class="tabs">
    <span class="tab file">File</span>
    <span class="tab">Home</span>
    <span class="tab">Definitions</span>
    <span class="tab">Geometry</span>
    <span class="tab">Materials</span>
    <span class="tab">Physics</span>
    <span class="tab">Mesh</span>
    <span class="tab">Study</span>
    <span class="tab">Results</span>
    <span class="tab">Developer</span>
    <span class="tab active">2D Plot Group 18</span>
    <span class="tab">Colored Selections</span>
    <span class="help">?</span>
  </div>
  <div class="rbody">
    <div class="rgroup g-plot">
      <div class="rcontent">
        <div class="big b44"><svg class="bi plotic"><use href="#plotbtn"/></svg><span class="bl plotl">Plot</span></div>
        <div class="big b44"><svg class="bi plotinic"><use href="#plotin"/></svg><span class="bl">Plot<br>In <i class="dn"></i></span></div>
      </div>
      <div class="rlabel">Plot</div>
    </div>
    <span class="rsep"></span>
    <div class="rgroup g-add">
      <div class="rcontent">
        <div class="rcol w130">
          <div class="rb"><svg class="ri"><use href="#sq"/></svg>Surface</div>
          <div class="rb"><svg class="ri"><use href="#height"/></svg>Surface with Height</div>
          <div class="rb"><svg class="ri"><use href="#arrowsurf"/></svg>Arrow Surface</div>
        </div>
        <div class="rcol w82">
          <div class="rb"><svg class="ri"><use href="#line"/></svg>Line</div>
          <div class="rb"><svg class="ri"><use href="#contour"/></svg>Contour</div>
          <div class="rb"><svg class="ri"><use href="#stream"/></svg>Streamline</div>
        </div>
        <div class="rcol w84">
          <div class="rb"><svg class="ri"><use href="#arrowline"/></svg>Arrow Line</div>
          <div class="rb"><svg class="ri"><use href="#mesh"/></svg>Mesh</div>
          <div class="rb"><svg class="ri"><use href="#annot"/></svg>Annotation</div>
        </div>
        <div class="big b38"><svg class="bi sqbig"><use href="#sq"/></svg><span class="bl">More<br>Plots <i class="dn"></i></span></div>
      </div>
      <div class="rlabel">Add Plot</div>
    </div>
    <span class="rsep"></span>
    <div class="rgroup g-attr">
      <div class="rcontent">
        <div class="rcol w121">
          <div class="rb off"><svg class="ri"><use href="#colorexpr"/></svg>Color Expression</div>
          <div class="rb"><svg class="ri"><use href="#deform"/></svg>Deformation</div>
          <div class="rb off"><svg class="ri"><use href="#heightoff"/></svg>Height Expression</div>
        </div>
        <div class="rcol w135">
          <div class="rb"><svg class="ri"><use href="#filter"/></svg>Filter</div>
          <div class="rb"><svg class="ri"><use href="#matapp"/></svg>Material Appearance</div>
          <div class="rb"><svg class="ri"><use href="#selection"/></svg>Selection</div>
        </div>
        <div class="big b56"><svg class="bi sqbig"><use href="#sq"/></svg><span class="bl">More<br>Attributes <i class="dn"></i></span></div>
      </div>
      <div class="rlabel">Attributes</div>
    </div>
    <span class="rsep"></span>
    <div class="rgroup g-sel">
      <div class="rcontent">
        <div class="rcol">
          <div class="rb on"><svg class="ri"><use href="#evalpt"/></svg>Evaluate</div>
          <div class="rb off"><svg class="ri"><use href="#cut1"/></svg>First Point for Cut Line</div>
          <div class="rb off"><svg class="ri"><use href="#cut2"/></svg>Second Point for Cut Line</div>
        </div>
      </div>
      <div class="rlabel">Select</div>
    </div>
    <span class="rsep"></span>
    <div class="rgroup g-exp">
      <div class="rcontent">
        <div class="big b56"><svg class="bi imgic"><use href="#image"/></svg><span class="bl one">Image</span></div>
        <div class="big b50"><svg class="bi animic"><use href="#anim"/></svg><span class="bl anil">Animation<br><i class="dn"></i></span></div>
      </div>
      <div class="rlabel">Export</div>
    </div>
    <span class="rsep"></span>
  </div>
</div>

<div class="main">
  <section class="panel p-model">
    <div class="phead">
      <h2 class="ptitle model">Model Builder</h2>
      <span class="pctl"><i class="dn big-dn"></i><svg class="pinic"><use href="#pin"/></svg></span>
    </div>
    <div class="tb mtb">
      <svg class="ti"><use href="#left"/></svg>
      <svg class="ti"><use href="#right"/></svg>
      <svg class="ti"><use href="#up"/></svg>
      <svg class="ti"><use href="#down"/></svg>
      <svg class="ti"><use href="#eye"/></svg>
      <svg class="ti"><use href="#listup"/></svg><span class="caret"></span>
      <svg class="ti ml3"><use href="#listdn"/></svg><span class="caret"></span>
      <svg class="ti ml6"><use href="#list"/></svg><span class="caret"></span>
      <svg class="ti"><use href="#mfilter"/></svg><span class="caret"></span>
    </div>
    <div class="filter">
      <span class="filterbox">Type filter text</span>
      <svg class="ti"><use href="#refresh"/></svg>
    </div>
    <div class="tree">
      <div class="row lv0"><svg class="ch"><use href="#chevd"/></svg><svg class="ic"><use href="#root"/></svg><span>thermal_actuator_simplified.mph <em>(root)</em></span></div>
      <div class="row lv1"><svg class="ch"><use href="#chevd"/></svg><svg class="ic"><use href="#globe"/></svg><span>Global Definitions</span></div>
      <div class="row lv2"><span class="ch"></span><svg class="ic"><use href="#pi"/></svg><span>Parameters 1</span></div>
      <div class="row lv2"><span class="ch"></span><svg class="ic"><use href="#dnn"/></svg><span>Deep Neural Network 1 <em>(dnn1)</em></span></div>
      <div class="row lv2"><span class="ch"></span><svg class="ic"><use href="#interp"/></svg><span>Interpolation 1 <em>(int1)</em></span></div>
      <div class="row lv2"><span class="ch"></span><svg class="ic"><use href="#gp"/></svg><span>Gaussian Process 1 <em>(gpm1, gpm1_stddev)</em></span></div>
      <div class="row lv2"><span class="ch"></span><svg class="ic"><use href="#gp"/></svg><span>Gaussian Process 2 <em>(gpm2_1)</em></span></div>
      <div class="row lv2"><span class="ch"></span><svg class="ic"><use href="#inputs"/></svg><span>Default Model Inputs</span></div>
      <div class="row lv2"><span class="ch"></span><svg class="ic"><use href="#mat"/></svg><span>Materials</span></div>
      <div class="row lv1"><svg class="ch"><use href="#chevr"/></svg><svg class="ic"><use href="#comp"/></svg><span>Thermal Actuator <em>(comp1)</em></span></div>
      <div class="row lv1"><svg class="ch"><use href="#chevd"/></svg><svg class="ic"><use href="#study"/></svg><span>Study 1</span></div>
      <div class="row lv2"><span class="ch"></span><svg class="ic"><use href="#uq"/></svg><span>Uncertainty Quantification</span></div>
      <div class="row lv2"><span class="ch"></span><svg class="ic"><use href="#step"/></svg><span class="stepname">Step 1: Stationary</span></div>
      <div class="row lv2"><svg class="ch"><use href="#chevr"/></svg><svg class="ic"><use href="#solver"/></svg><span>Solver Configurations</span></div>
      <div class="row lv2"><svg class="ch"><use href="#chevr"/></svg><svg class="ic"><use href="#job"/></svg><span>Job Configurations</span></div>
      <div class="row lv1"><svg class="ch"><use href="#chevd"/></svg><svg class="ic"><use href="#results"/></svg><span>Results</span></div>
      <div class="row lv2"><svg class="ch"><use href="#chevr"/></svg><svg class="ic"><use href="#uqg"/></svg><span>Uncertainty Quantification Graph</span></div>
      <div class="row lv2"><svg class="ch"><use href="#chevd"/></svg><svg class="ic"><use href="#data"/></svg><span>Datasets</span></div>
      <div class="row lv3"><span class="ch"></span><svg class="ic"><use href="#sol"/></svg><span>Study 1/Solution 1 <em>(sol1)</em></span></div>
      <div class="row lv3"><span class="ch"></span><svg class="ic"><use href="#sol"/></svg><span>Study 1/Parametric Solutions 1 <em>(sol2)</em></span></div>
      <div class="row lv3"><span class="ch"></span><svg class="ic"><use href="#sol"/></svg><span>Probe Solution 3 <em>(sol1)</em></span></div>
      <div class="row lv3"><svg class="ch"><use href="#chevr"/></svg><svg class="ic"><use href="#av"/></svg><span>Point Probe 1</span></div>
      <div class="row lv3"><span class="ch"></span><svg class="ic"><use href="#sol"/></svg><span>Study 1/Parametric Solutions 2 <em>(sol4)</em></span></div>
      <div class="row lv3"><span class="ch"></span><svg class="ic"><use href="#kde"/></svg><span>Kernel Density Estimation, comp1.point1</span></div>
      <div class="row lv3"><span class="ch"></span><svg class="ic"><use href="#grid"/></svg><span>Grid 2D 1</span></div>
      <div class="row lv2"><svg class="ch"><use href="#chevr"/></svg><svg class="ic"><use href="#views"/></svg><span>Views</span></div>
      <div class="row lv2"><svg class="ch"><use href="#chevr"/></svg><svg class="ic"><use href="#derived"/></svg><span>Derived Values</span></div>
      <div class="row lv2"><svg class="ch"><use href="#chevr"/></svg><svg class="ic"><use href="#tables"/></svg><span>Tables</span></div>
      <div class="row lv2"><svg class="ch"><use href="#chevr"/></svg><svg class="ic"><use href="#plot3d"/></svg><span>Electric Potential (ec)</span></div>
      <div class="row lv2"><svg class="ch"><use href="#chevr"/></svg><svg class="ic"><use href="#plot3d"/></svg><span>Electric Field Norm (ec)</span></div>
      <div class="row lv2"><svg class="ch"><use href="#chevr"/></svg><svg class="ic"><use href="#plot3d"/></svg><span>Temperature (ht)</span></div>
      <div class="row lv2"><svg class="ch"><use href="#chevr"/></svg><svg class="ic"><use href="#plot3d"/></svg><span>Stress (solid)</span></div>
      <div class="row lv2"><svg class="ch"><use href="#chevr"/></svg><svg class="ic"><use href="#plot3d"/></svg><span>Electric Potential (ec) 1</span></div>
      <div class="row lv2"><svg class="ch"><use href="#chevr"/></svg><svg class="ic"><use href="#plot3d"/></svg><span>Electric Field Norm (ec) 1</span></div>
      <div class="row lv2"><svg class="ch"><use href="#chevr"/></svg><svg class="ic"><use href="#plot3d"/></svg><span>Temperature (ht) 1</span></div>
      <div class="row lv2"><svg class="ch"><use href="#chevr"/></svg><svg class="ic"><use href="#plot3d"/></svg><span>Stress (solid) 1</span></div>
      <div class="row lv2"><svg class="ch"><use href="#chevr"/></svg><svg class="ic"><use href="#plot3d"/></svg><span>Electric Potential (ec) 2</span></div>
      <div class="row lv2"><svg class="ch"><use href="#chevr"/></svg><svg class="ic"><use href="#plot3d"/></svg><span>Electric Field Norm (ec) 2</span></div>
      <div class="row lv2"><svg class="ch"><use href="#chevr"/></svg><svg class="ic"><use href="#plot3d"/></svg><span>Temperature (ht) 2</span></div>
      <div class="row lv2"><svg class="ch"><use href="#chevr"/></svg><svg class="ic"><use href="#plot3d"/></svg><span>Stress (solid) 2</span></div>
      <div class="row lv2"><svg class="ch"><use href="#chevd"/></svg><svg class="ic"><use href="#sq"/></svg><span>2D Plot Group 18</span></div>
      <div class="row lv3"><svg class="ch"><use href="#chevd"/></svg><svg class="ic"><use href="#sq"/></svg><span>Surface 1</span></div>
      <div class="row lv4"><span class="ch"></span><svg class="ic"><use href="#height"/></svg><span>Height Expression 1</span></div>
      <div class="row lv3 sel"><svg class="ch"><use href="#chevd"/></svg><svg class="ic"><use href="#sq"/></svg><span>Surface 2</span></div>
      <div class="row lv4"><span class="ch"></span><svg class="ic"><use href="#height"/></svg><span>Height Expression 1</span></div>
      <div class="row lv2"><span class="ch"></span><svg class="ic"><use href="#export"/></svg><span>Export</span></div>
      <div class="row lv2"><span class="ch"></span><svg class="ic"><use href="#reports"/></svg><span>Reports</span></div>
    </div>
  </section>

  <section class="panel p-settings">
    <div class="phead">
      <h2 class="ptitle settings">Settings</h2>
      <span class="pctl blue"><i class="dn big-dn"></i><svg class="pinic"><use href="#pin"/></svg></span>
    </div>
    <div class="sub">Surface</div>
    <div class="acts">
      <svg class="ic"><use href="#plotbtn"/></svg><span>Plot</span>
      <svg class="ic act2"><use href="#cutplane"/></svg><span>Define Cut Plane</span>
    </div>
    <div class="frow r-label">
      <span class="flabel w41">Label:</span>
      <span class="inp grow">Surface 2</span>
      <span class="sidebtn"><svg class="ti"><use href="#notes"/></svg></span>
    </div>
    <div class="shdr mt9"><i class="tri-d"></i>Data</div>
    <div class="frow mt9 h22">
      <span class="flabel w52">Dataset:</span>
      <span class="sel-box grow">From parent<i class="dn"></i></span>
      <span class="sidebtn"><svg class="ti"><use href="#dset"/></svg></span>
    </div>
    <div class="shdr mt11"><i class="tri-d"></i>Expression
      <span class="shtools">
        <svg class="ti"><use href="#leftg"/></svg>
        <svg class="ti"><use href="#right"/></svg>
        <svg class="ti"><use href="#insert1"/></svg><i class="dn"></i>
        <svg class="ti"><use href="#insert2"/></svg><i class="dn"></i>
      </span>
    </div>
    <div class="fline mt9">Expression:</div>
    <div class="frow mt5"><span class="inp grow focus">gpm2_1(x1,x2)</span></div>
    <div class="fline mt6">Unit:</div>
    <div class="frow mt5"><span class="unitbox grow"><span class="unitdrop"><i class="dn"></i></span></span></div>
    <div class="frow mt7 h16"><span class="cb"></span><span class="desc">Description:</span></div>
    <div class="frow mt5"><span class="inp grow disabled">gpm2_1(x1,x2)</span></div>
    <div class="shdr mt11"><i class="tri-r"></i>Title</div>
    <div class="shdr mt2"><i class="tri-r"></i>Range</div>
    <div class="shdr mt2"><i class="tri-d"></i>Coloring and Style</div>
    <div class="frow mt9"><span class="flabel w153">Coloring:</span><span class="sel-box grow h21">Color table<i class="dn"></i></span></div>
    <div class="frow mt6 h22"><span class="flabel w153">Color table:</span><span class="swatch"></span><span class="swname">Magma</span><span class="sidebtn ml-auto"><svg class="ti"><use href="#palette"/></svg></span></div>
    <div class="frow mt5 h16"><span class="cb on"><svg viewBox="0 0 14 14"><path d="M3 7l3 4 6-8" fill="none" stroke="#222" stroke-width="2"/></svg></span><span class="cblabel">Color legend</span></div>
    <div class="frow mt6"><span class="flabel w153">Color table transformation:</span><span class="sel-box grow h21">None<i class="dn"></i></span></div>
    <div class="frow mt6"><span class="flabel w153">Color table type:</span><span class="sel-box grow h21">Continuous<i class="dn"></i></span></div>
    <div class="frow mt6"><span class="flabel w153">Scale:</span><span class="sel-box grow h21">Linear<i class="dn"></i></span></div>
    <div class="frow mt5 h16"><span class="cb"></span><span class="cblabel">Wireframe</span></div>
    <div class="shdr mt11"><i class="tri-r"></i>Quality</div>
    <div class="shdr mt2"><i class="tri-r"></i>Inherit Style</div>
  </section>

  <div class="rightcol">
    <section class="panel p-graphics">
      <div class="phead">
        <h2 class="ptitle graphics">Graphics</h2>
        <span class="pctl"><i class="dn big-dn"></i><svg class="pinic"><use href="#pin"/></svg></span>
      </div>
      <div class="tb gtb">
        <svg class="ti"><use href="#zoomin"/></svg>
        <svg class="ti"><use href="#zoomout"/></svg>
        <svg class="ti"><use href="#zoombox"/></svg><span class="caret"></span>
        <svg class="ti ml3"><use href="#fit"/></svg>
        <span class="tsep"></span>
        <svg class="ti"><use href="#views"/></svg><span class="caret"></span>
        <svg class="ti ml4"><use href="#xy"/></svg>
        <svg class="ti"><use href="#yz"/></svg>
        <svg class="ti"><use href="#xz"/></svg>
        <svg class="ti"><use href="#campers"/></svg>
        <span class="tsep"></span>
        <svg class="ti"><use href="#rotate"/></svg><span class="caret"></span>
        <span class="tsep"></span>
        <svg class="ti"><use href="#wire"/></svg><span class="caret"></span>
        <span class="tsep ml4"></span>
        <span class="split"><svg class="ti"><use href="#light"/></svg><span class="splitdiv"></span><span class="caret"></span></span>
        <svg class="ti"><use href="#box3"/></svg><span class="caret"></span>
        <span class="tog"><svg class="ti"><use href="#tgaxes"/></svg></span>
        <span class="tog"><svg class="ti"><use href="#tggrid"/></svg></span>
        <span class="tog"><svg class="ti"><use href="#tgleg"/></svg></span>
        <svg class="ti ml3"><use href="#aperture"/></svg><span class="caret"></span>
        <svg class="ti ml3"><use href="#camera"/></svg>
        <svg class="ti"><use href="#print"/></svg>
      </div>
      <div class="gcanvas">
        <div class="plottitle">Surface: Gaussian Process 1&nbsp; Surface: gpm2_1(x1,x2)</div>
        <svg class="scene" viewBox="0 0 1268 623">
          <defs>
            <linearGradient id="magma" gradientUnits="userSpaceOnUse" x1="250" y1="900" x2="1400" y2="100">
              <stop offset="0" stop-color="#000005"/><stop offset=".12" stop-color="#050418"/><stop offset=".25" stop-color="#150b38"/><stop offset=".38" stop-color="#300e55"/><stop offset=".5" stop-color="#4a1460"/><stop offset=".62" stop-color="#762658"/><stop offset=".74" stop-color="#96404e"/><stop offset=".82" stop-color="#a8604f"/><stop offset=".9" stop-color="#ad8068"/><stop offset="1" stop-color="#b5ad8c"/>
            </linearGradient>
            <linearGradient id="jet" gradientUnits="userSpaceOnUse" x1="250" y1="900" x2="1400" y2="100">
              <stop offset="0" stop-color="#1b1b9a"/><stop offset=".2" stop-color="#2222bb"/><stop offset=".3" stop-color="#2a3fc0"/><stop offset=".42" stop-color="#2a70b8"/><stop offset=".5" stop-color="#2a9aa8"/><stop offset=".58" stop-color="#3aa888"/><stop offset=".66" stop-color="#70a545"/><stop offset=".72" stop-color="#8aa020"/><stop offset=".78" stop-color="#9a9000"/><stop offset=".86" stop-color="#a04800"/><stop offset=".94" stop-color="#8f1000"/><stop offset="1" stop-color="#800000"/>
            </linearGradient>
            <linearGradient id="rainbow" x1="0" y1="0" x2="0" y2="1">
              <stop offset="0" stop-color="#600000"/><stop offset=".07" stop-color="#a00000"/><stop offset=".16" stop-color="#e02000"/><stop offset=".23" stop-color="#f05000"/><stop offset=".29" stop-color="#e89000"/><stop offset=".34" stop-color="#e8d800"/><stop offset=".4" stop-color="#d0f010"/><stop offset=".47" stop-color="#a0f040"/><stop offset=".54" stop-color="#70f080"/><stop offset=".6" stop-color="#50ffc0"/><stop offset=".65" stop-color="#40f0e0"/><stop offset=".7" stop-color="#30d8ff"/><stop offset=".76" stop-color="#30a0f8"/><stop offset=".84" stop-color="#3070f8"/><stop offset=".9" stop-color="#3040e0"/><stop offset=".95" stop-color="#2020c0"/><stop offset="1" stop-color="#1a1a80"/>
            </linearGradient>
            <linearGradient id="magmabar" x1="0" y1="0" x2="0" y2="1">
              <stop offset="0" stop-color="#fffac0"/><stop offset=".1" stop-color="#ffd596"/><stop offset=".2" stop-color="#fea86f"/><stop offset=".3" stop-color="#f9785d"/><stop offset=".38" stop-color="#e85362"/><stop offset=".46" stop-color="#cf4070"/><stop offset=".55" stop-color="#a8327d"/><stop offset=".63" stop-color="#862681"/><stop offset=".72" stop-color="#61157c"/><stop offset=".8" stop-color="#3c0f68"/><stop offset=".88" stop-color="#1d1147"/><stop offset=".95" stop-color="#0e0a28"/><stop offset="1" stop-color="#000004"/>
            </linearGradient>
          </defs>
          <g transform="translate(145 165) scale(.5102 .33333)">
            <g fill="none" stroke="#8f8f8f" stroke-width="1">
              <path vector-effect="non-scaling-stroke" d="M222 -270L163 648M399 -270L338 585M570 -270L515 475M735 -270L685 350M1030 -120L1012 110M1142 -120L1128 90M1262 -120L1245 80M1372 30L1345 300L1283 930M1345 300L1330 330L1173 830"/>
              <path vector-effect="non-scaling-stroke" d="M125 70L1000 -20M107 370L770 280"/>
              <path vector-effect="non-scaling-stroke" d="M820 -75L1040 100M1340 340L1450 428M1205 550L1420 735M955 890L1192 1120M855 990L1020 1155M745 1090L843 1193M612 1177L660 1232M190 822L240 810M283 925L330 912M378 1030L430 1018M480 1140L530 1128M915 925L1140 885M755 1085L1248 985"/>
            </g>
            <path fill="url(#magma)" d="M105 677C190 650 265 625 340 580C420 540 490 505 548 460C610 415 665 375 712 330C770 275 820 220 870 175C900 150 935 145 970 130C1010 110 1055 95 1100 90C1145 82 1190 80 1230 80C1285 80 1325 88 1360 95L1455 118C1420 185 1380 250 1340 320C1295 400 1250 475 1205 545L1125 665L1090 715L995 835C970 870 945 905 915 935C885 970 855 995 825 1020C790 1050 750 1085 715 1110C675 1140 630 1165 587 1187C500 1090 420 1005 340 915Z"/>
            <g fill="url(#jet)">
              <path d="M168 744C200 740 250 765 258 785C258 800 252 815 248 828Z"/>
              <path d="M265 635C275 620 305 608 330 612C325 630 300 645 278 645C268 645 262 640 265 635Z"/>
              <path d="M308 698C325 665 370 650 405 652C425 665 442 685 440 715C442 740 420 752 390 752C360 750 340 742 325 720Z"/>
              <path d="M475 597C495 585 520 565 538 558C550 570 556 590 548 608C535 622 515 625 500 615Z"/>
              <path d="M548 460L625 405L685 365C682 385 660 410 640 430C610 455 575 470 552 470Z"/>
              <path d="M610 490C612 470 625 450 650 425C680 410 710 390 738 378C750 395 755 430 770 452C785 465 840 420 875 415C895 418 902 435 900 455C898 475 890 495 895 508C910 508 930 490 940 497C948 515 940 550 925 575C905 595 880 600 865 600C852 595 855 572 840 570C810 570 785 580 770 568C750 550 748 530 745 505C720 495 660 500 620 493Z"/>
              <path d="M712 330C770 275 820 220 870 175C900 150 935 145 970 130C985 135 992 145 990 155C975 175 935 190 910 210C890 235 880 250 860 262C840 278 825 295 810 303C815 285 830 265 835 248C810 265 770 300 720 335Z"/>
              <path d="M948 320C950 295 960 270 975 255C995 240 1012 225 1020 200C1030 175 1030 160 1050 145C1070 130 1085 120 1105 125C1118 132 1118 150 1110 165C1095 180 1080 190 1075 210C1068 235 1062 250 1050 260C1025 285 1005 310 985 320C970 327 955 327 948 320Z"/>
              <path d="M1100 270L1110 262L1115 270L1105 278Z"/>
              <path d="M450 790C465 772 490 768 520 773C545 778 560 790 570 812C580 828 610 825 630 835C632 850 628 870 640 895C655 915 700 925 750 937C775 938 795 925 795 900C785 870 770 835 755 790C735 785 700 790 685 780C675 765 680 750 665 743C640 738 625 725 612 705C605 685 612 670 630 650C650 632 680 622 705 628C725 638 730 660 745 678C765 685 785 672 792 690C795 710 795 735 810 740C850 742 890 745 920 750C945 748 965 730 967 708C960 680 945 650 942 610C950 580 975 565 1000 550C1035 530 1070 510 1110 502C1130 490 1142 470 1138 450C1130 420 1128 390 1135 360C1142 320 1145 295 1155 270C1175 250 1200 235 1215 215C1235 185 1260 165 1300 158C1330 155 1350 150 1365 160C1378 180 1372 205 1360 235C1350 265 1340 295 1330 335C1310 375 1290 405 1265 425C1235 450 1210 470 1195 495C1175 525 1160 570 1145 610C1135 640 1130 650 1125 665L1090 715C1055 725 1025 745 1005 765C990 790 990 815 995 835C970 870 945 905 915 935L888 953C860 952 830 965 820 985C812 1000 818 1012 825 1020C790 1050 750 1085 715 1110C690 1095 650 1100 610 1108C590 1105 600 1090 615 1075C640 1050 630 1025 620 1000C610 970 600 950 580 935C555 925 520 925 510 915C505 900 510 885 490 872C470 860 455 830 450 790Z"/>
            </g>
            <path d="M1455 118L1430 170" stroke="#7a0a0a" stroke-width="2" vector-effect="non-scaling-stroke"/>
          </g>
          <g class="lbl wide">
            <text x="907" y="316" text-anchor="middle">10</text>
            <text x="885" y="417" text-anchor="middle">5</text>
            <text x="918" y="373">×10<tspan dy="-5" class="sup">-7</tspan></text>
            <text x="329" y="526" text-anchor="middle">3</text>
            <text x="242" y="535">×10<tspan dy="-5" class="sup">-4</tspan><tspan dy="5"> m</tspan></text>
            <text x="671" y="570" text-anchor="middle">3</text>
            <text x="660" y="593" text-anchor="middle">m</text>
          </g>
          <g transform="translate(45 578)" class="gizmo">
            <path d="M0 0V-30" stroke="#2278c4" stroke-width="1.600"/><path d="M0 -34l-3 6h6z" fill="#2278c4"/>
            <path d="M0 0L22 -5" stroke="#3aa84a" stroke-width="1.600"/><path d="M26 -6l-6-3 1 6z" fill="#3aa84a"/>
            <path d="M0 0L12 14" stroke="#d1123f" stroke-width="1.600"/><path d="M14 17l-1-7-4 3z" fill="#d1123f"/>
            <text x="3" y="-33">z</text><text x="29" y="-1">y</text><text x="18" y="18">x</text>
          </g>
          <rect class="barbox" x="1109.500" y="58.500" width="16" height="530" fill="url(#rainbow)"/>
          <rect class="barbox" x="1197.500" y="58.500" width="15" height="530" fill="url(#magmabar)"/>
          <path class="ticks" d="M1109 91h3M1122 91h3M1109 163h3M1122 163h3M1109 234h3M1122 234h3M1109 306h3M1122 306h3M1109 377h3M1122 377h3M1109 448h3M1122 448h3M1109 519h3M1122 519h3M1197 96h3M1210 96h3M1197 167h3M1210 167h3M1197 238h3M1210 238h3M1197 308h3M1210 308h3M1197 379h3M1210 379h3M1197 449h3M1210 449h3M1197 520h3M1210 520h3"/>
          <g class="lbl leg">
            <text x="1126" y="50">×10<tspan dy="-5" class="sup">-7</tspan></text>
            <text x="1214" y="50">×10<tspan dy="-5" class="sup">-7</tspan></text>
            <text x="1134" y="96">14</text><text x="1134" y="168">12</text><text x="1134" y="239">10</text><text x="1134" y="311">8</text><text x="1134" y="382">6</text><text x="1134" y="453">4</text><text x="1134" y="524">2</text>
            <text x="1221" y="101">14</text><text x="1221" y="172">12</text><text x="1221" y="243">10</text><text x="1221" y="313">8</text><text x="1221" y="384">6</text><text x="1221" y="454">4</text><text x="1221" y="525">2</text>
          </g>
          <g transform="translate(1246 -4)"><path d="M0 2l13-2 3 13-13 3z" fill="#e6e8ec"/><rect x="3" y="3" width="11" height="9" fill="#17358f"/><path d="M5 4l6 3-6 4z" fill="#f2e04a"/></g>
        </svg>
      </div>
    </section>
    <section class="panel p-msgs">
      <div class="mtabs">
        <span class="mtab t1">Messages <b>×</b></span>
        <span class="mtab t2">Progress</span>
        <span class="mtab t3">Log</span>
        <span class="mtab active">Quantities of Interest <b>×</b></span>
        <span class="pctl mctl"><i class="dn big-dn"></i><svg class="pinic"><use href="#pin"/></svg></span>
      </div>
      <div class="tb qtb">
        <svg class="ti"><use href="#msglist"/></svg>
        <span class="tsep g7"></span>
        <span class="tog g4"><span class="num"><i>8.85</i><i>e-12</i></span></span>
        <span class="tog g3"><span class="auto">AUTO</span></span>
        <span class="num plain n1 g7"><i>8.5</i><i>e-1</i></span>
        <span class="num plain n2 g11"><i>850</i><i>e-3</i></span>
        <span class="num plain n3 g7">0.85</span>
        <span class="tsep g6"></span>
        <span class="tog g6"><svg class="tbli"><use href="#tbl"/></svg></span>
        <svg class="ti g5"><use href="#sphere"/></svg>
        <span class="tsep g9"></span>
        <svg class="ti g8"><use href="#mbroom"/></svg>
        <svg class="ti g8"><use href="#trash"/></svg>
        <svg class="ti g8"><use href="#tblp"/></svg>
        <svg class="ti g8"><use href="#sq"/></svg>
        <svg class="ti g8"><use href="#contour"/></svg>
        <svg class="ti g8"><use href="#scatter"/></svg>
        <svg class="ti g8"><use href="#tocopy"/></svg>
        <svg class="ti g8"><use href="#toexp"/></svg>
        <svg class="ti g8"><use href="#tomod"/></svg>
        <svg class="ti g8"><use href="#tables"/></svg><span class="caret g4"></span>
      </div>
      <div class="tablewrap">
        <table class="qoi">
          <thead><tr><th class="c1">L</th><th class="c2">DV</th><th class="c3">comp1.point1</th><th></th></tr></thead>
          <tbody>
            <tr><td>1.5000070562865868E-4</td><td>3.936785550983081</td><td>4.422420483663072E-7</td><td></td></tr>
            <tr><td>1.5000070562865868E-4</td><td>1.939986282578875</td><td>1.114329538685052E-7</td><td></td></tr>
            <tr><td>3.416579168712989E-4</td><td>0.5000127013158565</td><td>1.513694828348999E-8</td><td></td></tr>
            <tr><td>3.9999929437134127E-4</td><td>4.3737362190722955</td><td>1.1797032680796204E-6</td><td></td></tr>
            <tr><td>3.9999929437134127E-4</td><td>1.5187852461515015</td><td>1.485859743026033E-7</td><td></td></tr>
            <tr><td>2.432791692774927E-4</td><td>0.5000127013158565</td><td>1.231789256681794E-8</td><td></td></tr>
            <tr><td>2.5310293146369963E-4</td><td>4.79320987654321</td><td>1.0629706702030943E-6</td><td></td></tr>
            <tr><td>3.9999929437134127E-4</td><td>2.617169638774577</td><td>4.3572647060458983E-7</td><td></td></tr>
            <tr><td>3.7399405578417925E-4</td><td>4.697645176040237</td><td>1.3073634582854787E-6</td><td></td></tr>
          </tbody>
        </table>
        <div class="vscroll"><i class="sc-up"></i><span class="thumb"></span><i class="sc-dn"></i></div>
      </div>
    </section>
  </div>
</div>
<div class="status">2.47 GB | 2.81 GB</div>
</body>
</html>
```
FILE: styles.css
```css
* { box-sizing: border-box; }
html, body { margin: 0; padding: 0; }
body {
  width: 2132px; height: 1137px; overflow: hidden; background: #fbfcff; color: #222;
  font: 12px/16px "Noto Sans", sans-serif; letter-spacing: -.38px;
}
i, em { font-style: italic; }
.defs { position: absolute; width: 0; height: 0; }

/* Spacing helpers */
.ml2 { margin-left: 2px; } .ml3 { margin-left: 3px; } .ml4 { margin-left: 4px; } .ml6 { margin-left: 6px; } .ml7 { margin-left: 7px; } .ml10 { margin-left: 10px; }

/* Title bar */
.titlebar { height: 27px; background: #fff; display: flex; align-items: center; padding: 2px 0 0 6px; }
.qat { display: flex; align-items: center; gap: 7px; width: 1046px; }
.qi { width: 16px; height: 16px; flex: none; }
.qi.logo { width: 11px; }
.qi.sm { width: 11px; }
.qi.undoq { margin-left: -3px; }
.vsep { width: 1px; height: 17px; background: #aaa; flex: none; }
.apptitle { width: 305px; white-space: nowrap; letter-spacing: -.25px; }
.winbtns { margin-left: auto; display: flex; gap: 34px; padding-right: 23px; }
.wb { width: 12px; height: 12px; }

/* carets */
.caret { width: 8px; height: 8px; flex: none; position: relative; margin-left: -2px; }
.caret::after { content: ""; position: absolute; left: 0; top: 2px; border: 4px solid transparent; border-top: 4px solid #222; border-bottom: 0; }
.caret.tight { margin-left: -4px; }
.caret.pale::after { border-top-color: #aaa; }
.dn { display: inline-block; width: 0; height: 0; border: 3px solid transparent; border-top: 3px solid #222; border-bottom: 0; vertical-align: middle; }
.big-dn { border-width: 4px; border-bottom: 0; border-top: 4px solid #555; margin-right: 6px; }

/* Ribbon */
.ribbon { margin: 3px 8px 0 11px; height: 114px; }
.tabs { height: 24px; background: #ebecee; display: flex; align-items: center; position: relative; }
.tab { height: 24px; line-height: 24px; padding: 0 8.750px; white-space: nowrap; }
.tab.file { background: #3a8ccb; color: #fff; width: 55px; text-align: center; margin: 1px; height: 22px; line-height: 22px; padding: 0; }
.tab.active { background: #f9fbff; color: #3a8ccb; }
.help { position: absolute; right: 2px; top: 3px; width: 17px; height: 16px; background: #3a8ccb; color: #fff; text-align: center; font-size: 14px; line-height: 16px; border-radius: 1px; }
.rbody { height: 90px; background: #f9fbff; border: 1px solid #d4d6dc; border-width: 0 1px 1px 0; box-shadow: inset 1px 0 0 #e6e8ee; display: flex; }
.rsep { width: 1px; height: 75px; margin-top: 8px; background: #d5d7da; flex: none; }
.rgroup { display: flex; flex-direction: column; padding-top: 4px; flex: none; }
.rcontent { display: flex; height: 64px; }
.rlabel { text-align: center; color: #777; height: 16px; line-height: 16px; margin-top: 6px; }
.g-plot { width: 100px; padding-left: 6px; }
.g-add { width: 355px; padding-left: 11px; }
.g-attr { width: 336px; padding-left: 10px; }
.g-sel { width: 173px; padding-left: 6px; }
.g-exp { width: 118px; }
.g-exp .rlabel { padding-right: 20px; }
.rcol { display: flex; flex-direction: column; gap: 2px; flex: none; }
.w130 { width: 130px; } .w82 { width: 82px; } .w84 { width: 84px; } .w121 { width: 121px; } .w135 { width: 135px; }
.rb { display: flex; align-items: center; height: 20px; white-space: nowrap; gap: 2px; }
.ri { width: 16px; height: 16px; flex: none; }
.rb.off { color: #b4b4b4; }
.g-sel .rb { padding: 0 8px 0 4px; gap: 2px; border: 1px solid transparent; }
.rb.on { background: #b9defa; border-color: #8cc6f2 !important; width: 70px; }
.big { display: flex; flex-direction: column; align-items: center; padding-top: 7px; flex: none; text-align: center; }
.b44 { width: 44px; } .b38 { width: 38px; } .b56 { width: 56px; } .b50 { width: 50px; }
.bi { flex: none; }
.plotic { width: 24px; height: 20px; margin-top: 1px; }
.plotinic { width: 32px; height: 25px; }
.sqbig { width: 24px; height: 25px; }
.imgic { width: 30px; height: 24px; margin-top: 1px; }
.animic { width: 30px; height: 20px; margin-top: 1px; margin-bottom: 4px; }
.bl { line-height: 13px; margin-top: 5px; white-space: nowrap; }
.bl.one { margin-top: 2px; }
.bl.plotl { margin-top: 6px; }
.anil { margin-top: 4px; }

/* Main */
.main { display: flex; gap: 6px; margin: 4px 8px 0 11px; height: 952px; }
.panel { border: 1px solid #d2d4da; background: #fafbff; display: flex; flex-direction: column; flex: none; }
.p-model { width: 386px; }
.p-settings { width: 445px; border-color: #a8d3f5; }
.rightcol { flex: 1; display: flex; flex-direction: column; gap: 6px; min-width: 0; }
.phead { display: flex; align-items: center; height: 38px; padding: 2px 4px 2px 7px; flex: none; }
.ptitle { margin: 0; font: 300 20px/34px "Open Sans", sans-serif; letter-spacing: -.3px; }
.ptitle.model { color: #3767ad; }
.ptitle.settings { color: #3d9be8; }
.ptitle.graphics { color: #3f62a3; }
.pctl { margin-left: auto; display: flex; align-items: center; color: #555; }
.pctl.blue { color: #3a8ccb; }
.pctl.blue .big-dn { border-top-color: #3a8ccb; }
.pinic { width: 7px; height: 11px; }
.tb { display: flex; align-items: center; gap: 8px; height: 18px; flex: none; }
.ti { width: 15px; height: 15px; flex: none; }
.tsep { width: 1px; height: 16px; background: #cdd0d4; flex: none; }
.mtb { padding-left: 8px; margin-top: -4px; }
.filter { display: flex; align-items: center; gap: 11px; padding: 0 0 0 5px; margin-top: 7px; height: 19px; flex: none; }
.filterbox { width: 347px; height: 18px; background: #fff; border: 1px solid #cfd1d6; color: #9a9a9a; line-height: 16px; padding-left: 2px; }
.tree { margin: 5px 4px 0 5px; height: 862px; background: #fff; border: 1px solid #d0d2d6; padding-top: 1px; }
.row { height: 18px; display: flex; align-items: center; white-space: nowrap; color: #2c2c2c; }
.row em { color: #333; }
.ch { width: 12px; height: 12px; flex: none; margin-right: 4px; }
.ic { width: 16px; height: 16px; flex: none; margin-right: 6px; }
.lv0 { padding-left: 4px; }
.lv1 { padding-left: 24px; }
.lv2 { padding-left: 44px; }
.lv3 { padding-left: 64px; }
.lv4 { padding-left: 84px; }
.row.sel { background: #d9dadc; }
.stepname { margin-left: 6px; }

/* Settings */
.sub { height: 16px; padding-left: 6px; color: #3d9be8; font: 300 14.500px/16px "Open Sans", sans-serif; flex: none; }
.acts { display: flex; align-items: center; height: 18px; margin-top: 2px; padding-left: 7px; flex: none; }
.acts .ic { margin-right: 4px; }
.acts .act2 { margin-left: 7px; }
.frow { display: flex; align-items: center; padding: 0 4px 0 5px; flex: none; white-space: nowrap; }
.r-label { margin-top: 13px; height: 22px; }
.grow { flex: 1; min-width: 0; }
.flabel { flex: none; }
.w41 { width: 41px; } .w52 { width: 52px; } .w153 { width: 153px; }
.inp { height: 18px; background: #fff; border: 1px solid #d0d2d6; line-height: 16px; padding-left: 2px; }
.inp.focus { border-color: #7cc0f0; }
.inp.disabled { background: #fafbfc; color: #9e9e9e; border-color: #e4e5e8; }
.sidebtn { width: 20px; height: 22px; margin-left: 8px; border: 1px solid #d9dade; border-radius: 2px; background: #f3f4f6; display: flex; align-items: center; justify-content: center; flex: none; }
.ml-auto { margin-left: auto; }
.sel-box { height: 20px; display: flex; align-items: center; justify-content: space-between; padding: 0 8px 0 12px; border: 1px solid #d0d2d6; border-radius: 2px; background: linear-gradient(#f3f3f3, #ebebeb); }
.sel-box .dn, .unitdrop .dn { border-width: 4px; border-bottom: 0; }
.h21 { height: 21px; }
.h22 { height: 22px; }
.h16 { height: 16px; }
.shdr { height: 26px; background: #dfe8f4; display: flex; align-items: center; padding-left: 26px; position: relative; font-size: 13px; letter-spacing: -.3px; flex: none; }
.tri-d { position: absolute; left: 6px; top: 9px; border: 4px solid transparent; border-top: 5px solid #555; border-bottom: 0; }
.tri-r { position: absolute; left: 7px; top: 8px; width: 0; height: 0; border: 4px solid transparent; border-left: 5px solid #a6a6a6; border-right: 0; }
.shtools { margin-left: auto; display: flex; align-items: center; gap: 7px; padding-right: 9px; }
.shtools .dn { border-width: 3.500px; border-bottom: 0; margin-left: -3px; margin-right: 2px; }
.fline { height: 16px; padding-left: 5px; flex: none; }
.unitbox { height: 20px; background: #fff; border: 1px solid #d0d2d6; border-radius: 2px; display: flex; justify-content: flex-end; }
.unitdrop { width: 20px; background: #eee; display: flex; align-items: center; justify-content: center; }
.cb { width: 14px; height: 14px; border: 1px solid #777; background: #f2f2f2; flex: none; margin-left: 1px; }
.cb svg { width: 12px; height: 12px; display: block; }
.desc { margin-left: 15px; }
.cblabel { margin-left: 5px; }
.swatch { width: 32px; height: 16px; background: linear-gradient(90deg, #000004, #2a0f60, #8c2981, #e85362, #fe9f6d, #fff5c0); flex: none; }
.swname { margin-left: 10px; }
.mt2 { margin-top: 2px; } .mt5 { margin-top: 5px; } .mt6 { margin-top: 6px; } .mt7 { margin-top: 7px; }
.mt9 { margin-top: 9px; } .mt10 { margin-top: 10px; } .mt11 { margin-top: 11px; }

/* Graphics */
.p-graphics { height: 691px; }
.gtb { padding-left: 7px; margin-top: -4px; }
.split { width: 37px; height: 20px; margin-left: -4px; background: #9fd0f6; border: 1px solid #4aa3e6; border-radius: 2px; display: flex; align-items: center; gap: 3px; padding-left: 2px; flex: none; }
.split .ti { width: 14px; }
.split .caret { margin-left: 2px; }
.splitdiv { width: 1px; height: 18px; background: #4a90c8; margin-left: 1px; }
.tog { width: 20px; height: 20px; border: 1px solid #4aa3e6; border-radius: 2px; background: #9fd0f6; display: flex; align-items: center; justify-content: center; flex: none; margin-right: -5px; }
.gcanvas { flex: 1; position: relative; margin-top: 14px; background: linear-gradient(#fafbff, #e4effb); min-height: 0; }
.plottitle { text-align: center; padding-top: 4px; height: 20px; white-space: nowrap; position: relative; z-index: 1; font-size: 13px; letter-spacing: .12px; }
.scene { position: absolute; left: 0; top: 0; width: 1268px; height: 623px; overflow: hidden; }
.lbl text, .gizmo text { font: 12px "Noto Sans", sans-serif; fill: #222; letter-spacing: 0; }
.lbl.wide text { font-size: 13px; }
.leg text { font-size: 12.500px; }
.lbl .sup { font-size: 9px; }
.barbox { stroke: #707070; stroke-width: 1; }
.ticks { stroke: #222; stroke-width: 1; fill: none; }

/* Messages */
.p-msgs { height: 255px; }
.mtabs { display: flex; align-items: flex-end; height: 28px; gap: 8px; border-bottom: 1px solid #d2d4da; flex: none; padding-top: 4px; }
.mtab { height: 23px; background: #eceded; padding: 1px 4px 0 4px; line-height: 22px; font-size: 12.500px; letter-spacing: -.2px; white-space: nowrap; flex: none; }
.mtab b { color: #c6c6c6; font-weight: 400; font-size: 16px; margin-left: 3px; vertical-align: top; }
.mtab.t1 { width: 90px; padding-left: 7px; }
.mtab.t2 { width: 60px; }
.mtab.t3 { width: 30px; }
.mtab.active { background: #fafbff; color: #2b62ae; border: 1px solid #d2d4da; border-bottom: 0; height: 24px; margin-bottom: -1px; width: 151px; }
.mctl { align-self: center; padding-right: 4px; }
.qtb { padding-left: 12px; margin-top: 5px; gap: 0; height: 20px; }
.qtb .tog { margin-right: 0; }
.qtb .caret { margin-left: 4px; }
.g3 { margin-left: 3px; } .g4 { margin-left: 4px; } .g5 { margin-left: 5px; } .g6 { margin-left: 6px; } .g7 { margin-left: 7px; } .g8 { margin-left: 8px; } .g9 { margin-left: 9px; } .g11 { margin-left: 11px; }
.num { display: flex; flex-direction: column; align-items: center; color: #3a8ccb; font: 9.500px/11px Roboto, sans-serif; letter-spacing: -.1px; flex: none; white-space: nowrap; }
.num i { font-style: normal; }
.n1 { width: 11px; } .n2 { width: 14px; } .n3 { width: 18px; font-size: 11px; }
.auto { color: #2278c4; font-size: 8px; font-weight: 700; letter-spacing: -.4px; }
.tbli { width: 17px; height: 13px; }
.tablewrap { display: flex; padding: 8px 12px 0 9px; gap: 4px; height: 187px; }
.qoi { flex: 1; width: 1231px; border-collapse: collapse; table-layout: fixed; font: 11.500px/17px Roboto, sans-serif; letter-spacing: -.42px; height: 186px; }
.qoi th { height: 26px; background: #f0f0f0; font: 12.500px/20px "Noto Sans", sans-serif; letter-spacing: -.2px; text-align: left; padding: 2px 4px 0; border-right: 1px solid #b8b8b8; border-left: 1px solid #b8b8b8; }
.qoi th:last-child { border-right: 0; }
.qoi td { height: 18px; padding: 0 0 0 1px; border: 1px solid #b8b8b8; border-top: 0; background: #f6f6f7; white-space: nowrap; overflow: hidden; }
.qoi td:last-child { border-right: 0; }
.c1 { width: 125px; } .c2 { width: 108px; } .c3 { width: 125px; }
.vscroll { width: 14px; flex: none; height: 186px; background: #f3f3f4; display: flex; flex-direction: column; align-items: center; position: relative; }
.sc-up, .sc-dn { width: 7px; height: 7px; border: 1px solid #aaa; border-width: 1px 0 0 1px; transform: rotate(45deg); margin-top: 8px; flex: none; }
.sc-dn { transform: rotate(225deg); margin-top: auto; margin-bottom: 8px; }
.thumb { position: absolute; left: 0; top: 127px; width: 14px; height: 24px; background: #dcdcdc; }

.status { text-align: left; padding-left: 1445px; margin-top: 13px; height: 16px; font-size: 12.500px; letter-spacing: -.2px; }
```
